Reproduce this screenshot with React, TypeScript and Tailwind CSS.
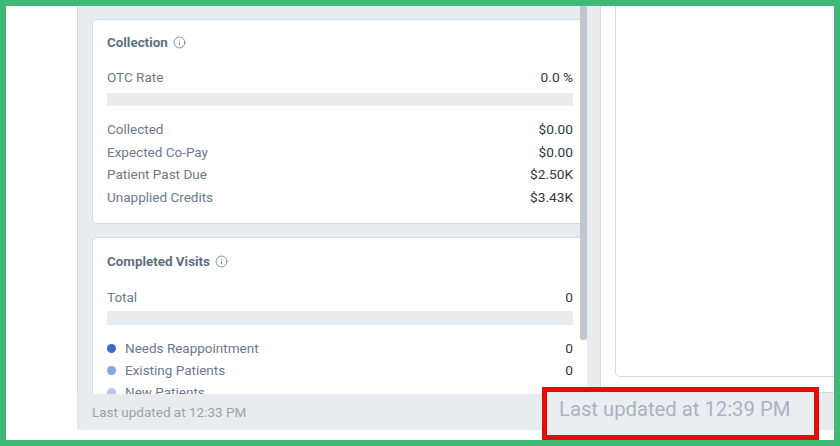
import { Info } from 'lucide-react';

const amounts = [
  { label: 'Collected', value: '$0.00' },
  { label: 'Expected Co-Pay', value: '$0.00' },
  { label: 'Patient Past Due', value: '$2.50K' },
  { label: 'Unapplied Credits', value: '$3.43K' },
];

const visits = [
  { label: 'Needs Reappointment', value: '0', dot: 'bg-[#3b6cc4]' },
  { label: 'Existing Patients', value: '0', dot: 'bg-[#89a7de]' },
  { label: 'New Patients', value: '0', dot: 'bg-[#b5c8ea]' },
];

const CardTitle = ({ title }: { title: string }) => (
  <div className="flex items-center gap-[5px] h-[18px]">
    <h4 className="text-[13.4px] leading-[18px] font-bold text-[#5f6f81]">{title}</h4>
    <Info className="w-[13px] h-[13px] text-[#5f6f81] -mt-[2px]" strokeWidth={1.4} />
  </div>
);

const MetricRow = ({ label, value }: { label: string; value: string }) => (
  <div className="flex items-center justify-between h-[18px]">
    <span className="text-[13.5px] leading-[18px] text-[#6b7a8c]">{label}</span>
    <span className="text-[13.7px] leading-[18px] text-[#2f3842]">{value}</span>
  </div>
);

export default function App() {
  return (
    <div
      className="relative w-[840px] h-[446px] overflow-hidden bg-white border-[6px] border-[#3fb975] flex flex-col pl-[71px]"
      style={{ fontFamily: 'Roboto, sans-serif' }}
    >
      <div className="flex h-[388px]">
        {/* left summary column */}
        <div className="relative w-[524px] shrink-0 flex bg-[#e9ecef] border-l border-r border-[#d5dae1] overflow-hidden">
          <div className="w-[508px] shrink-0 pl-[14px] pt-[13px] flex flex-col gap-[13px]">
            <div className="h-[205px] shrink-0 bg-white border border-[#d5dae1] rounded-[5px] pl-[14px] pr-[12px] pt-[14px]">
              <CardTitle title="Collection" />
              <div className="mt-[16px]">
                <MetricRow label="OTC Rate" value="0.0 %" />
              </div>
              <div className="h-[13px] bg-[#e9ecef] mt-[7px]" />
              <div className="mt-[14px] flex flex-col gap-[4.7px]">
                {amounts.map((row) => (
                  <MetricRow key={row.label} label={row.label} value={row.value} />
                ))}
              </div>
            </div>
            <div className="h-[205px] shrink-0 bg-white border border-[#d5dae1] rounded-[5px] pl-[14px] pr-[12px] pt-[15px]">
              <CardTitle title="Completed Visits" />
              <div className="mt-[17px]">
                <MetricRow label="Total" value="0" />
              </div>
              <div className="h-[14px] bg-[#e9ecef] mt-[5px]" />
              <div className="mt-[14px] flex flex-col gap-[4px]">
                {visits.map((row) => (
                  <div key={row.label} className="flex items-center h-[18px]">
                    <span className={`w-[9px] h-[9px] rounded-full ${row.dot}`} />
                    <span className="ml-[9px] text-[13.5px] leading-[18px] text-[#6b7a8c]">{row.label}</span>
                    <span className="ml-auto text-[13.7px] leading-[18px] text-[#2f3842]">{row.value}</span>
                  </div>
                ))}
              </div>
            </div>
          </div>
          {/* scrollbar */}
          <div className="absolute left-[502px] top-0 bottom-0 w-[7px] bg-white">
            <div className="h-[334px] bg-[#c1c7cf] rounded-b-[3px]" />
          </div>
        </div>
        {/* right column */}
        <div className="flex-1 flex flex-col">
          <div className="flex-1 flex flex-col pl-[14px] border-b border-[#d5dae1]">
            <div className="h-[371px] border-l border-b border-[#d5dae1] rounded-bl-[5px]" />
          </div>
          <div className="h-[1px] bg-[#e9ecef]" />
        </div>
      </div>
      <div className="h-[36px] bg-[#e9ecef] pl-[15px] flex items-center">
        <span className="text-[13.5px] text-[#98a3b1]">Last updated at 12:33 PM</span>
      </div>
      {/* red highlight over the footer */}
      <div className="absolute left-[536px] top-[381px] w-[277px] h-[53px] border-[5px] border-[#e80a0a] bg-[#ebeef1] pl-[12px] pt-[4px]">
        <span className="text-[20.25px] leading-[26px] text-[#a9b3c1]">Last updated at 12:39 PM</span>
      </div>
    </div>
  );
}
